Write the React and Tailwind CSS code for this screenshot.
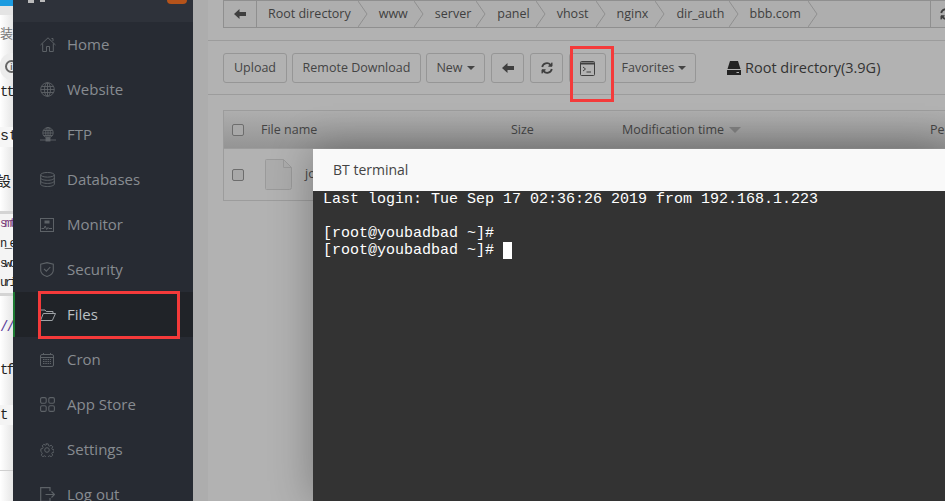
import React from "react";

const ICON = "#5d6267";

const HomeIcon = () => (
  <svg width="16" height="15" viewBox="0 0 16 15" fill="none" stroke={ICON}>
    <path d="M.5 8 8 .8 15.500 8M2.700 6.500v8h3.800V9.500h3v5h3.800v-8M11.500 1.500h1.500v2.500" />
  </svg>
);
const GlobeIcon = () => (
  <svg width="15" height="15" viewBox="0 0 15 15" fill="none" stroke={ICON} strokeWidth="0.9">
    <circle cx="7.500" cy="7.500" r="6.800" />
    <ellipse cx="7.500" cy="7.500" rx="3" ry="6.800" />
    <path d="M7.500.7v13.600M1.500 4.500h12M.7 7.500h13.600M1.500 10.500h12" />
  </svg>
);
const FtpIcon = () => (
  <svg width="16" height="15" viewBox="0 0 16 15" fill="none" stroke={ICON} strokeWidth="0.9">
    <circle cx="8" cy="5.700" r="5.200" />
    <ellipse cx="8" cy="5.700" rx="2.300" ry="5.200" />
    <path d="M8 .5v10.400M3.300 3.500h9.400M2.800 6h10.400M3.500 8.500h9M0 13h16" />
    <rect x="6" y="11.500" width="4" height="2.500" fill={ICON} />
  </svg>
);
const DbIcon = () => (
  <svg width="15" height="15" viewBox="0 0 15 15" fill="none" stroke={ICON}>
    <ellipse cx="7.500" cy="2.800" rx="6.800" ry="2.300" />
    <path d="M.7 2.800v9.400c0 1.300 3 2.300 6.800 2.300s6.800-1 6.800-2.300V2.800M.7 6c0 1.300 3 2.300 6.800 2.300S14.300 7.300 14.300 6M.7 9.100c0 1.300 3 2.300 6.800 2.300s6.800-1 6.800-2.300" />
  </svg>
);
const MonitorIcon = () => (
  <svg width="14" height="14" viewBox="0 0 14 14" fill="none" stroke={ICON}>
    <rect x=".5" y=".5" width="13" height="13" />
    <path d="M1.500 10.500h2.500l1.200-2.500 1.500 3.500 1.300-2 .8 1h3.200" />
    <rect x="4.500" y="2.500" width="5" height="3" fill={ICON} stroke="none" />
  </svg>
);
const ShieldIcon = () => (
  <svg width="14" height="15" viewBox="0 0 14 15" fill="none" stroke={ICON} strokeWidth="1.100">
    <path d="M7 .6 13.300 2.200v6c0 3-3 5.200-6.300 6.300C3.700 13.400.7 11.200.7 8.200v-6Z" />
    <path d="M4 6.800 6.400 9.200 10.300 5" />
  </svg>
);
const FolderIcon = () => (
  <svg width="16" height="12" viewBox="0 0 16 12" fill="none" stroke="#9ea2a6">
    <path d="M.5 11.500V1h4.500l1.200 1.500H13v2M.5 11.500h11.800l3.200-7H3.300Z" />
  </svg>
);
const CronIcon = () => (
  <svg width="14" height="14" viewBox="0 0 14 14" fill="none" stroke={ICON}>
    <rect x=".5" y="1.500" width="13" height="12" rx="1.500" />
    <path d="M.5 4.500h13M3.500 0v2M10.500 0v2" />
    <path d="M3 6.500h8M3 8.500h8M3 10.500h8" strokeDasharray="1.500 .8" />
  </svg>
);
const AppsIcon = () => (
  <svg width="15" height="15" viewBox="0 0 15 15" fill="none" stroke={ICON} strokeWidth="1.100">
    <rect x=".6" y=".6" width="5.600" height="5.600" rx="1.400" />
    <rect x="8.800" y=".6" width="5.600" height="5.600" rx="1.400" />
    <rect x=".6" y="8.800" width="5.600" height="5.600" rx="1.400" />
    <rect x="8.800" y="8.800" width="5.600" height="5.600" rx="1.400" />
  </svg>
);
const GearIcon = () => (
  <svg width="14" height="14" viewBox="0 0 14 14" fill="none" stroke={ICON}>
    <circle cx="7" cy="7" r="2.300" />
    <path d="M5.800.6h2.400l.3 1.800 1.300.6 1.500-1 1.700 1.700-1 1.500.6 1.300 1.800.3v2.400l-1.800.3-.6 1.300 1 1.500-1.700 1.700-1.500-1-1.300.6-.3 1.800H5.800l-.3-1.800-1.300-.6-1.500 1-1.700-1.700 1-1.500-.6-1.300L.6 8.200V5.800l1.800-.3.6-1.300-1-1.500 1.700-1.700 1.500 1 1.300-.6Z" transform="scale(.96) translate(.3 .3)" />
  </svg>
);
const LogoutIcon = () => (
  <svg width="15" height="15" viewBox="0 0 15 15" fill="none" stroke={ICON} strokeWidth="1.200">
    <path d="M10 4V.7H.7v13.600H10V11M5.500 7.500h9M11.500 4.500l3 3-3 3" />
  </svg>
);

const navItems = [
  ["Home", HomeIcon],
  ["Website", GlobeIcon],
  ["FTP", FtpIcon],
  ["Databases", DbIcon],
  ["Monitor", MonitorIcon],
  ["Security", ShieldIcon],
  ["Files", FolderIcon],
  ["Cron", CronIcon],
  ["App Store", AppsIcon],
  ["Settings", GearIcon],
  ["Log out", LogoutIcon],
];

const crumbs = [
  ["Root directory", "pr-[7px]"],
  ["www", "pr-[6px]"],
  ["server", "pr-[5px]"],
  ["panel", "pr-[6px]"],
  ["vhost", "pr-[7px]"],
  ["nginx", "pr-[7px]"],
  ["dir_auth", "pr-[4px]"],
  ["bbb.com", "pr-[7px]"],
];

const BackArrow = () => (
  <svg width="12" height="10" viewBox="0 0 12 10" fill="#3f3f3f">
    <path d="M5.500 0v3H12v4H5.500v3L0 5Z" />
  </svg>
);
const RefreshIcon = () => (
  <svg className="shrink-0" width="12" height="12" viewBox="0 0 12 12" fill="none" stroke="#3f3f3f" strokeWidth="1.800">
    <path d="M1.200 5A4.800 4.800 0 0 1 9.500 2.800M10.800 7A4.800 4.800 0 0 1 2.500 9.200" />
    <path d="M11 .6v3.600H7.400M1 11.400V7.800h3.600" fill="#3f3f3f" strokeWidth="1" />
  </svg>
);
const Caret = () => <span className="ml-1 inline-block h-0 w-0 border-x-[4px] border-t-[4px] border-x-transparent border-t-[#444]" />;

const ToolButton = ({ className, children }) => (
  <div className={`flex h-[30px] shrink-0 items-center justify-center rounded-[3px] border border-[#969696] pt-px text-[12.5px] text-[#444] ${className}`}>
    {children}
  </div>
);

const monoLine = "whitespace-nowrap font-['Liberation_Mono',monospace]";

// sliver of the blog page behind the panel screenshot
const BackgroundStrip = () => (
  <div className="flex h-[501px] w-[13px] shrink-0 flex-col overflow-hidden bg-gradient-to-r from-white to-[#e6e6e6] text-[#222]">
    <div className="h-[6px] shrink-0 bg-[#1b9be0]" />
    <div className="h-[9px] shrink-0 bg-[#e4e4e4]" />
    <div className="flex h-[30px] shrink-0 items-center whitespace-nowrap pt-[6px] text-[13px] text-[#777] font-['Noto_Sans_CJK_SC',sans-serif]">装 P</div>
    <div className="mt-[8px] flex h-[27px] shrink-0 items-center rounded-l-[12px] bg-[#ececec] pl-[5px]">
      <span className="flex h-[13px] w-[13px] shrink-0 items-center justify-center rounded-full border-2 border-[#666] text-[8px] font-bold text-[#666]">i</span>
    </div>
    <div className={`mt-[3px] h-[19px] shrink-0 text-[14px] leading-[18px] tracking-[-2px] ${monoLine}`}>ttix</div>
    <div className={`mt-[25px] h-[20px] shrink-0 bg-[#f6f6f6] text-[15px] leading-[20px] ${monoLine}`}>st</div>
    <div className="mt-[23px] h-[20px] shrink-0 -ml-[3px] whitespace-nowrap text-[14px] leading-[20px] font-['Noto_Sans_CJK_SC',sans-serif]">設</div>
    <div className="mt-[21px] h-[3px] shrink-0 bg-[#d4d4d4]" />
    <div className={`h-[20px] shrink-0 bg-[#f4f4f4] text-[12px] leading-[20px] tracking-[-2.500px] text-[#7a3a7a] ${monoLine}`}>smt</div>
    <div className={`h-[20px] shrink-0 bg-[#f4f4f4] text-[12px] leading-[20px] tracking-[-2.500px] ${monoLine}`}>n_e</div>
    <div className={`h-[20px] shrink-0 bg-[#f4f4f4] text-[12px] leading-[20px] tracking-[-2.500px] ${monoLine}`}>swo</div>
    <div className={`h-[19px] shrink-0 bg-[#f4f4f4] text-[12px] leading-[19px] tracking-[-2.500px] ${monoLine}`}>uri</div>
    <div className="h-[3px] shrink-0 bg-[#d4d4d4]" />
    <div className={`mt-[21px] h-[20px] shrink-0 text-[14px] leading-[20px] tracking-[-2px] text-[#5a3a9a] ${monoLine}`}>//c</div>
    <div className={`mt-[23px] h-[20px] shrink-0 text-[14px] leading-[20px] tracking-[-2px] ${monoLine}`}>tfi</div>
    <div className={`mt-[25px] h-[20px] shrink-0 bg-[#f4f4f4] text-[14px] leading-[20px] tracking-[-2px] ${monoLine}`}>t f</div>
    <div className="mt-[45px] h-px shrink-0 bg-[#cfcfcf]" />
  </div>
);

const Sidebar = () => (
  <div className="flex h-[501px] w-[180px] shrink-0 flex-col overflow-hidden bg-[#272b33]">
    <div className="relative h-[22px] shrink-0 bg-[#2e323a]">
      <div className="absolute left-[15px] top-0 h-[3px] w-[6px] bg-[#bbb]" />
      <div className="absolute left-[27px] top-0 h-[2px] w-[5px] bg-[#bbb]" />
      <div className="absolute left-[154px] top-0 h-[4px] w-[20px] rounded-b-[6px] bg-[#b5531a]" />
    </div>
    {navItems.map(([label, Icon]) => (
      <div
        key={label}
        className={`flex h-[45px] shrink-0 items-center text-[15px] ${label === "Files" ? "border-l-2 border-[#1d7a33] bg-[#202328] pl-[25px] text-[#bcc0c4]" : "pl-[27px] text-[#878c91]"}`}
      >
        <span className="flex w-[27px] shrink-0 items-center"><Icon /></span>
        {label}
      </div>
    ))}
  </div>
);

const Crumb = ({ label, pad }) => (
  <div className="flex h-full shrink-0 items-center">
    <span className={`pl-[11px] text-[12.5px] text-[#3f3f3f] ${pad}`}>{label}</span>
    <svg width="10" height="26" viewBox="0 0 10 26" fill="none" stroke="#8f8f8f">
      <path d="M0 0 9 13 0 26" />
    </svg>
  </div>
);

const Checkbox = () => <span className="block h-[12px] w-[12px] rounded-[2px] border border-[#6d6d6d] bg-[#a8a8a8]" />;

const FilePanel = () => (
  <div className="ml-[15px] flex h-[501px] min-w-0 flex-1 flex-col overflow-hidden bg-[#b2b2b2]">
    <div className="flex h-[41px] shrink-0 border-b border-[#9c9c9c] pl-[15px]">
      <div className="mb-[12px] flex h-[28px] min-w-0 flex-1 items-center border-y border-l border-[#8f8f8f] bg-[#aeaeae]">
        <div className="flex h-full w-[33px] shrink-0 items-center justify-center border-r border-[#8f8f8f]"><BackArrow /></div>
        {crumbs.map(([label, pad]) => <Crumb key={label} label={label} pad={pad} />)}
        <div className="ml-auto flex h-full w-[15px] shrink-0 items-center overflow-hidden border-l border-[#8f8f8f] pl-[9px]"><RefreshIcon /></div>
      </div>
    </div>
    <div className="flex h-[54px] shrink-0 items-center gap-[5px] border-b border-[#9c9c9c] pl-[15px]">
      <ToolButton className="w-[64px]">Upload</ToolButton>
      <ToolButton className="w-[129px]">Remote Download</ToolButton>
      <ToolButton className="w-[59px]">New<Caret /></ToolButton>
      <ToolButton className="ml-px w-[33px]"><BackArrow /></ToolButton>
      <ToolButton className="ml-px w-[33px]"><RefreshIcon /></ToolButton>
      <ToolButton className="ml-px w-[37px]">
        <svg width="15" height="15" viewBox="0 0 15 15" fill="none" stroke="#3f3f3f">
          <rect x=".5" y=".5" width="14" height="14" rx="1" />
          <path d="M1 2.500h13" strokeWidth="2" />
          <path d="M3 6l2.500 2L3 10M6.500 11H11" />
        </svg>
      </ToolButton>
      <ToolButton className="ml-px w-[84px]">Favorites<Caret /></ToolButton>
      <div className="ml-[26px] flex shrink-0 items-center gap-[4px] text-[14.5px] text-[#333]">
        <svg width="14" height="14" viewBox="0 0 14 14" fill="#222">
          <path d="M3 0h8l2.500 8h-13Z" />
          <path d="M0 9h14v5H0Z" />
          <rect x="9.500" y="11" width="2.500" height="1" fill="#b2b2b2" />
        </svg>
        Root directory(3.9G)
      </div>
    </div>
    <div className="ml-[15px] mt-[15px] h-[91px] shrink-0 border-y border-l border-[#9c9c9c]">
      <div className="flex h-[38px] items-center border-b border-[#9c9c9c] bg-gradient-to-b from-[#aeaeae] to-[#949494] pt-px text-[12.5px] text-[#444]">
        <div className="w-[37px] shrink-0 pl-[8px]"><Checkbox /></div>
        <div className="w-[250px] shrink-0">File name</div>
        <div className="w-[111px] shrink-0">Size</div>
        <div className="flex w-[308px] shrink-0 items-center">
          Modification time
          <span className="ml-[5px] h-0 w-0 border-x-[6px] border-t-[6px] border-x-transparent border-t-[#7f7f7f]" />
        </div>
        <div className="whitespace-nowrap">Permission</div>
      </div>
      <div className="flex h-[51px] items-center text-[12.5px] text-[#444]">
        <div className="w-[41px] shrink-0 pl-[8px]"><Checkbox /></div>
        <svg width="27" height="31" viewBox="0 0 27 31" fill="#acacac" stroke="#9a9a9a">
          <path d="M1.500.5h17l8 8v20a2 2 0 0 1-2 2h-23a1 1 0 0 1-1-1v-28a1 1 0 0 1 1-1Z" />
          <path d="M18.500.5v8h8" fill="none" />
        </svg>
        <span className="ml-[13px]">jo</span>
      </div>
    </div>
  </div>
);

const TerminalModal = () => (
  <div className="absolute left-[313px] top-[149px] h-[352px] w-[632px] shadow-[0_0_40px_rgba(0,0,0,0.3)]">
    <div className="flex h-[42px] items-center bg-[#f9f9f9] pb-[2px] pl-[20px] text-[14px] text-[#444]">BT terminal</div>
    <div className="h-[310px] bg-[#333333] pl-[10px] text-[15px] leading-[17px] whitespace-pre text-white font-['Liberation_Mono',monospace]">
      <div>Last login: Tue Sep 17 02:36:26 2019 from 192.168.1.223</div>
      <div>&nbsp;</div>
      <div>[root@youbadbad ~]#</div>
      <div className="flex">
        <span>[root@youbadbad ~]# </span>
        <span className="block h-[17px] w-[9px] bg-white" />
      </div>
    </div>
  </div>
);

export default function App() {
  return (
    <div className="relative flex h-[501px] w-[945px] overflow-hidden bg-[#adadad] font-['Open_Sans',sans-serif]">
      <BackgroundStrip />
      <Sidebar />
      <FilePanel />
      <TerminalModal />
      {/* red annotation boxes drawn on the screenshot */}
      <div className="absolute left-[38px] top-[291px] h-[48px] w-[142px] border-[3px] border-[#f43a3a]" />
      <div className="absolute left-[570px] top-[46px] h-[56px] w-[44px] border-[3px] border-[#f43a3a]" />
    </div>
  );
}
